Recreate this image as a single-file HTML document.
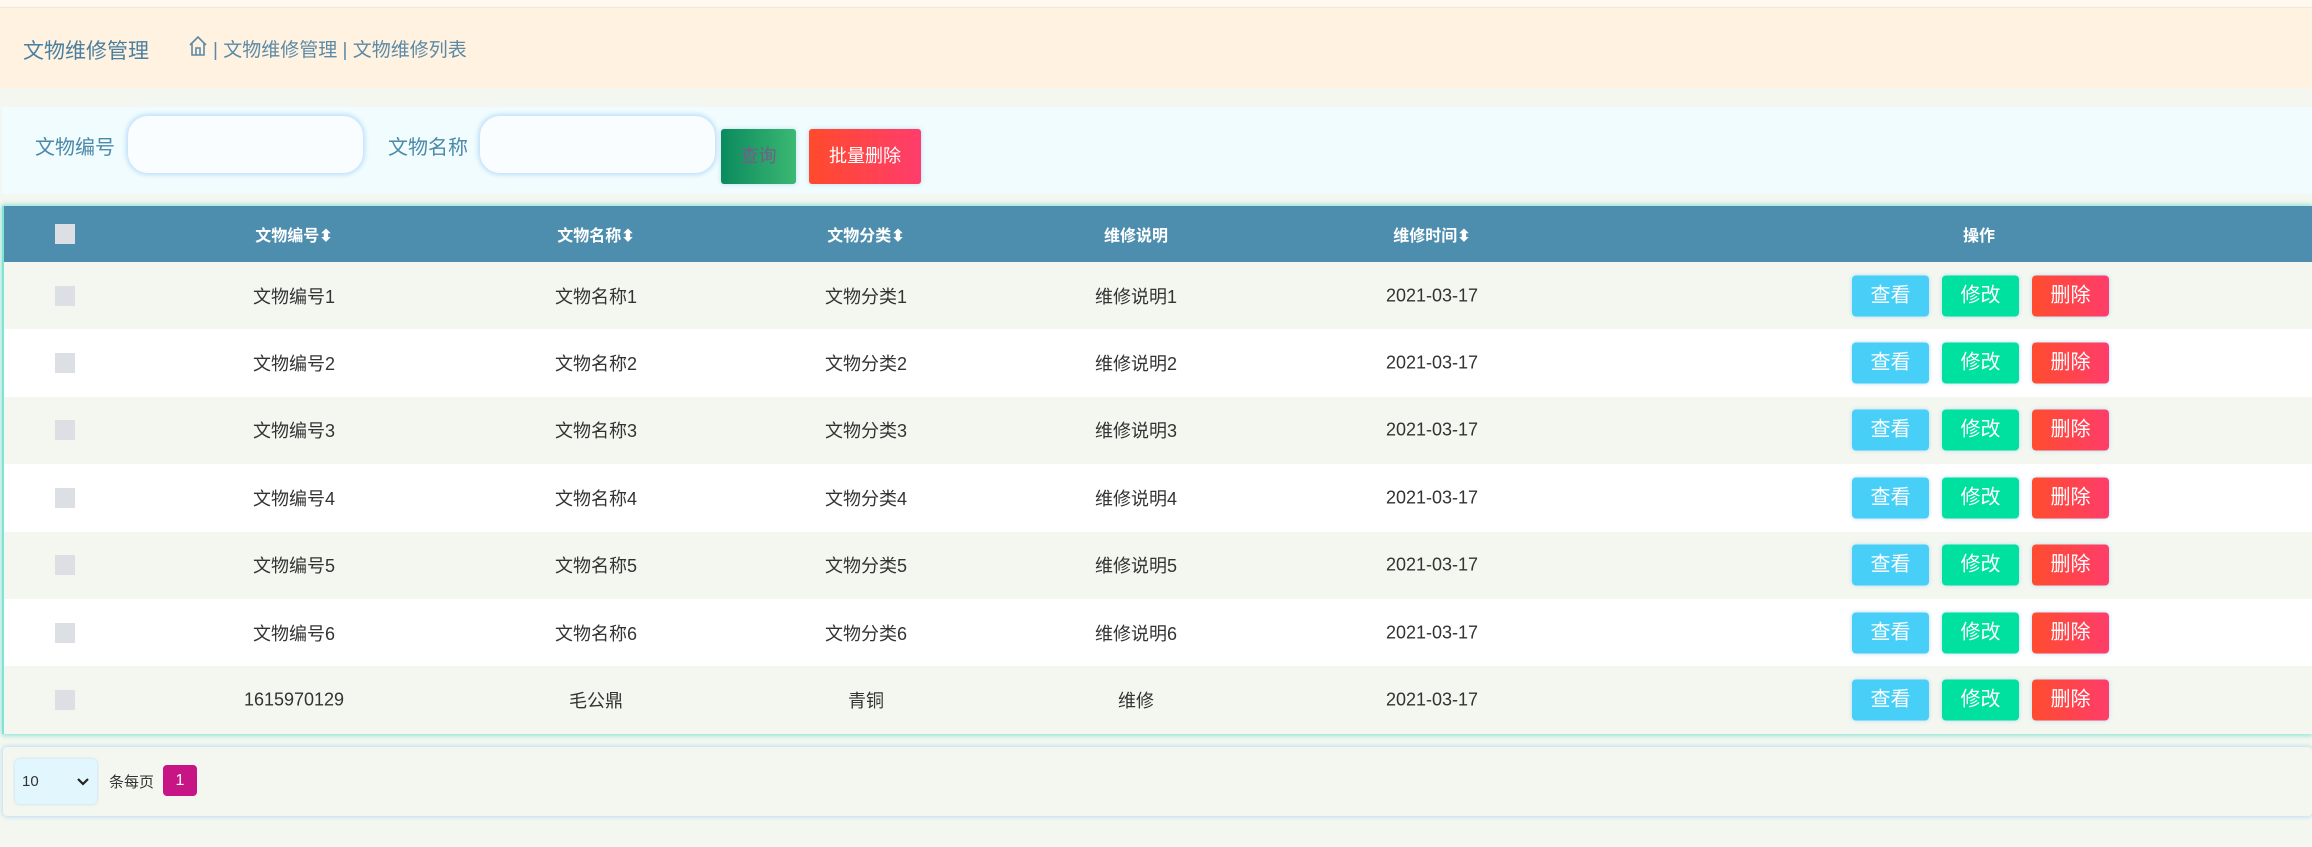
<!DOCTYPE html>
<html><head><meta charset="utf-8"><style>
*{margin:0;padding:0;box-sizing:border-box}
body{width:2312px;height:847px;background:#f3f7ef;font-family:"Liberation Sans","Noto Sans CJK SC",sans-serif;position:relative;overflow:hidden;color:#333}
.top{position:absolute;left:0;top:0;width:2312px;height:8px;background:#fff8ee;border-bottom:1px solid #f0e6da}
.hdr{position:absolute;left:0;top:8px;width:2312px;height:80px;background:#fff2e0}
.ttl{position:absolute;left:23px;top:35px;font-size:21px;color:#4a7fa0}
.bc{position:absolute;top:35px;font-size:19px;color:#5c8aa6}
.srch{position:absolute;left:2px;top:107px;width:2310px;height:87px;background:#f0fcfd}
.lbl{position:absolute;font-size:20px;color:#4d89a8;top:131px}
.inp{position:absolute;top:116px;width:235px;height:57px;background:#fafdff;border-radius:20px;box-shadow:0 0 4px 2px #bfe0fb}
.btn{position:absolute;top:129px;height:55px;border-radius:3px;font-size:18px;text-align:center;line-height:55px;box-shadow:0 0 4px #b8d8f5}
.tbl{position:absolute;left:2px;top:206px;width:2310px;height:528px;border-left:2px solid #7fe3d8;box-shadow:0 -2px 4px #9ee6dc,0 2px 4px #9ee6dc;background:#fff}
.row{position:absolute;left:0;width:2310px;height:67.4px}
.c{position:absolute;top:50%;transform:translate(-50%,-50%);font-size:18px;white-space:nowrap}
.h .c{color:#fff;font-weight:bold;font-size:16px}
.cb{width:20px;height:20px;background:#dcdfe4}
.b{position:absolute;top:50%;transform:translateY(-50%);width:77px;height:41px;border-radius:4px;color:#fff;font-size:20px;text-align:center;line-height:41px;box-shadow:0 0 4px #b8d8f5}
.pg{position:absolute;left:3px;top:747px;width:2309px;height:69px;border-radius:4px;background:#f3f7ef;box-shadow:0 0 4px 1px #bcdcf3}
</style></head><body>
<div class="top"></div>
<div class="hdr"></div>
<div class="ttl">文物维修管理</div>
<svg style="position:absolute;left:188px;top:35px" width="20" height="22" viewBox="0 0 20 22"><path d="M2 10 L10 2 L18 10 M4 8 V20 H16 V8 M8 20 V13 H12 V20" fill="none" stroke="#5c8aa6" stroke-width="1.6"/></svg>
<div class="bc" style="left:213px">| 文物维修管理 | 文物维修列表</div>
<div class="srch"></div>
<div class="lbl" style="left:35px">文物编号</div>
<div class="inp" style="left:128px"></div>
<div class="lbl" style="left:388px">文物名称</div>
<div class="inp" style="left:480px"></div>
<div class="btn" style="left:721px;width:75px;background:linear-gradient(90deg,#0b8a5e,#3bb872);color:#7a5a8a">查询</div>
<div class="btn" style="left:809px;width:112px;background:linear-gradient(90deg,#ff4a2c,#ff3d6c);color:#fff">批量删除</div>
<div class="tbl">
<div class="row h" style="top:0;height:56px;background:#4d8eae">
<div class="c cb" style="left:61px;top:50%"></div>
<div class="c" style="left:290px">文物编号⬍</div>
<div class="c" style="left:592px">文物名称⬍</div>
<div class="c" style="left:862px">文物分类⬍</div>
<div class="c" style="left:1132px">维修说明</div>
<div class="c" style="left:1428px">维修时间⬍</div>
<div class="c" style="left:1975px">操作</div>
</div>
</div>
<div class="pg"></div>
<div style="position:absolute;left:15px;top:759px;width:82px;height:45px;background:#e2f7fd;border-radius:5px;box-shadow:0 0 3px #b8d8f5;font-size:15px;line-height:45px;padding-left:7px">10<svg style="position:absolute;right:8px;top:18px" width="12" height="9" viewBox="0 0 12 9"><path d="M1 2 L6 7 L11 2" fill="none" stroke="#222" stroke-width="2.2"/></svg></div>
<div style="position:absolute;left:109px;top:771px;font-size:15px">条每页</div>
<div style="position:absolute;left:163px;top:765px;width:34px;height:31px;background:#c71585;border-radius:4px;color:#fff;font-size:16px;text-align:center;line-height:31px">1</div>
<script>
var t=document.querySelector('.tbl');
var d=[["文物编号1","文物名称1","文物分类1","维修说明1"],["文物编号2","文物名称2","文物分类2","维修说明2"],["文物编号3","文物名称3","文物分类3","维修说明3"],["文物编号4","文物名称4","文物分类4","维修说明4"],["文物编号5","文物名称5","文物分类5","维修说明5"],["文物编号6","文物名称6","文物分类6","维修说明6"],["1615970129","毛公鼎","青铜","维修"]];
d.forEach(function(r,i){
var h='<div class="row" style="top:'+(56+i*67.4)+'px;background:'+(i%2?'#fff':'#f3f7ef')+'">'+
'<div class="c cb" style="left:61px"></div>'+
'<div class="c" style="left:290px">'+r[0]+'</div><div class="c" style="left:592px">'+r[1]+'</div><div class="c" style="left:862px">'+r[2]+'</div><div class="c" style="left:1132px">'+r[3]+'</div><div class="c" style="left:1428px">2021-03-17</div>'+
'<div class="b" style="left:1848px;background:#48cff8">查看</div><div class="b" style="left:1938px;background:#00e09e">修改</div><div class="b" style="left:2028px;background:linear-gradient(90deg,#ff4c2f,#ff3d6a)">删除</div></div>';
t.insertAdjacentHTML('beforeend',h);});
</script>
</body></html>
